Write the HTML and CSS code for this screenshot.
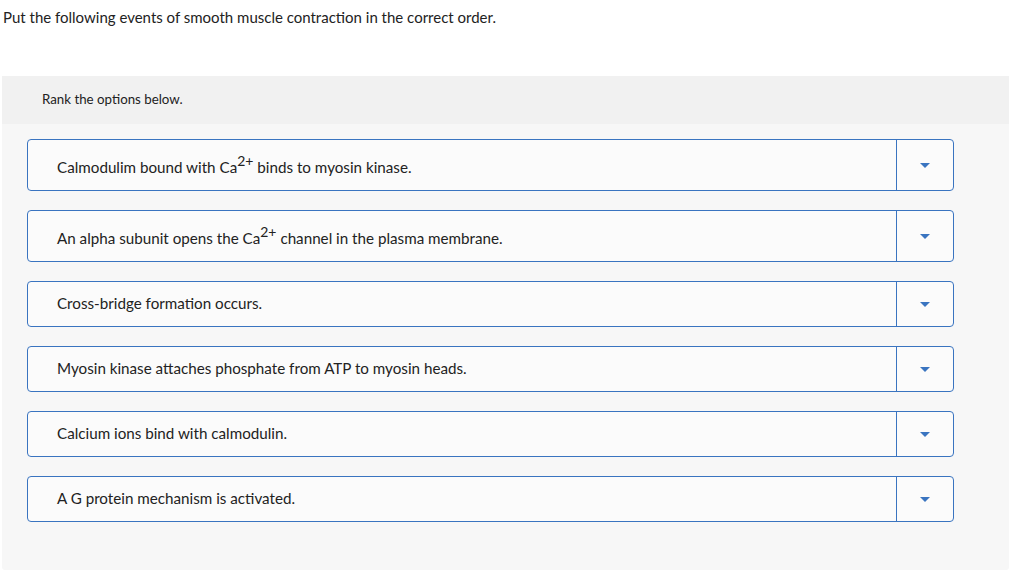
FILE: index.html
```html
<!DOCTYPE html>
<html>
<head>
<meta charset="utf-8">
<link rel="stylesheet" href="styles.css">
</head>
<body>
<p class="prompt">Put the following events of smooth muscle contraction in the correct order.</p>
<div class="panel">
  <div class="panel-head">Rank the options below.</div>
  <div class="panel-body">
    <div class="row"><div class="label">Calmodulim bound with Ca<sup>2+</sup> binds to myosin kinase.</div><div class="drop"><span class="tri"></span></div></div>
    <div class="row"><div class="label">An alpha subunit opens the Ca<sup>2+</sup> channel in the plasma membrane.</div><div class="drop"><span class="tri"></span></div></div>
    <div class="row"><div class="label">Cross-bridge formation occurs.</div><div class="drop"><span class="tri"></span></div></div>
    <div class="row"><div class="label">Myosin kinase attaches phosphate from ATP to myosin heads.</div><div class="drop"><span class="tri"></span></div></div>
    <div class="row"><div class="label">Calcium ions bind with calmodulin.</div><div class="drop"><span class="tri"></span></div></div>
    <div class="row"><div class="label">A G protein mechanism is activated.</div><div class="drop"><span class="tri"></span></div></div>
  </div>
</div>
</body>
</html>
```
FILE: styles.css
```css
html, body { margin: 0; padding: 0; background: #fff; }
body { font-family: Lato, "Open Sans", sans-serif; color: #222; }
.prompt { margin: 0; padding: 8px 0 0 3px; font-size: 15px; line-height: 18px; }
.panel { margin: 50px 15px 0 2px; background: #f7f7f7; border-radius: 3px; }
.panel-head { background: #f1f1f1; height: 48px; padding-left: 40px; font-size: 13.3px; line-height: 47px; }
.panel-body { padding: 15px 55px 48px 25px; display: flex; flex-direction: column; gap: 19px; }
.row { display: flex; border: 1px solid #3a74c0; border-radius: 4px; background: #fbfbfb; }
.label { flex: 1; padding: 11px 20px 13px 29px; font-size: 15.2px; line-height: 20px; }
.label sup { font-size: 14px; line-height: 0; vertical-align: 7px; }
.row:nth-child(-n+2) .label { padding-top: 17px; padding-bottom: 13px; }
.drop { width: 56px; border-left: 1px solid #3a74c0; display: flex; align-items: center; justify-content: center; }
.tri { width: 0; height: 0; border-left: 5px solid transparent; border-right: 5px solid transparent; border-top: 5px solid #3a74c0; }
```
